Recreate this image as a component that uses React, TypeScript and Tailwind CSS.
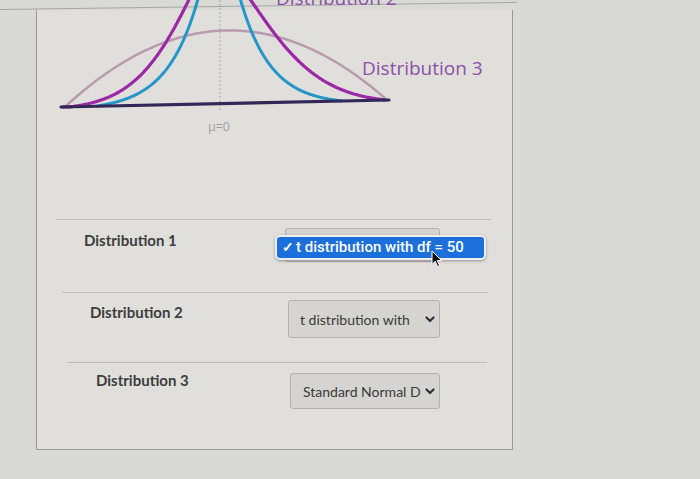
import React from "react";

const by = (x: number) => 107 - ((x - 60) * 7) / 327;

function build(fn: (x: number) => number, x0: number, x1: number) {
  let d = "";
  for (let x = x0; x <= x1; x += 1) {
    const y = fn(x);
    d += (d ? " L" : "M") + x.toFixed(1) + "," + y.toFixed(1);
  }
  return d;
}

const mauvePath = build((x) => {
  const d = x - 225;
  const t = Math.max(1 - (d / 161) ** 2, 0);
  return by(x) - 73 * t;
}, 64, 386);

const purplePath = build((x) => {
  const d = Math.abs(x - 220);
  let h: number;
  if (x < 220) {
    h = 160 * Math.exp(-0.00219 * Math.pow(d, 1.5)) - 2.9;
  } else {
    h = 140 * Math.exp(-0.00166 * Math.pow(d, 1.5)) - 4.2;
  }
  return by(x) - Math.max(h, 0);
}, 61, 385);

const cyanPath = build((x) => {
  const d = Math.abs(x - 218);
  const h = 215 * Math.exp(-d / 31) - 4;
  return by(x) - Math.max(h, 0);
}, 96, 341);

function Chevron() {
  return (
    <svg width="10" height="7" viewBox="0 0 10 7" className="shrink-0">
      <polyline
        points="1.5,1.5 5,5 8.5,1.5"
        fill="none"
        stroke="#333"
        strokeWidth="2.2"
        strokeLinecap="round"
        strokeLinejoin="round"
      />
    </svg>
  );
}

function Chart() {
  return (
    <svg width="477" height="219" viewBox="36 0 477 219" className="block">
      <line x1="219" y1="0" x2="219" y2="112" stroke="#a9a8a4" strokeWidth="1" strokeDasharray="2 2" />
      <path d={mauvePath} fill="none" stroke="#b99baf" strokeWidth="2.5" />
      <path d={cyanPath} fill="none" stroke="#2596c8" strokeWidth="3" />
      <path d={purplePath} fill="none" stroke="#9b28a5" strokeWidth="3.2" />
      <line x1="60" y1="107" x2="388" y2="100" stroke="#322858" strokeWidth="3.2" strokeLinecap="round" />
      <text x="275" y="5" fontSize="19" fill="#8c50aa" fontFamily="'Open Sans', sans-serif">
        Distribution 2
      </text>
      <text x="361" y="75" fontSize="19" fill="#8c50aa" fontFamily="'Open Sans', sans-serif">
        Distribution 3
      </text>
      <text x="207" y="131" fontSize="12.5" fill="#a09f9b" fontFamily="'Open Sans', sans-serif">
        μ=0
      </text>
    </svg>
  );
}

function Cursor() {
  return (
    <svg width="12" height="18" viewBox="0 0 12 18" className="absolute left-[145px] top-[21px]">
      <path
        d="M1,1 L1,14.5 L4.2,11.3 L6.6,16.6 L8.6,15.7 L6.3,10.5 L10.6,10.5 Z"
        fill="#111"
        stroke="#fff"
        strokeWidth="1"
        strokeLinejoin="round"
      />
    </svg>
  );
}

export default function App() {
  return (
    <div
      className="relative w-[700px] h-[479px] overflow-hidden bg-[#d9d9d5] flex flex-col"
      style={{ fontFamily: "Lato, 'Open Sans', sans-serif" }}
    >
      <div className="h-[10px] shrink-0" />
      <div className="ml-[36px] w-[477px] h-[440px] border-l border-r border-b border-[#9a9995] bg-[#e0dfdb] flex flex-col">
        <div className="-mt-[10px] h-[219px] shrink-0 relative">
          <div className="absolute left-[-37px] top-[9px] w-[517px] h-px bg-[#a6a5a1] origin-top-left -rotate-[0.8deg]" />
          <div className="relative">
            <Chart />
          </div>
        </div>
        <div className="h-px bg-[#bdbcb8] ml-[19px] w-[435px] shrink-0" />

        {/* Row 1 */}
        <div className="h-[72px] flex shrink-0">
          <div className="w-[248px] pl-[47px] pt-[10px] text-[15px] leading-[20px] font-bold text-[#3d3d3d]">
            Distribution 1
          </div>
          <div className="relative mt-[8px] w-[155px] h-[34px] rounded-[3px] border border-[#b3b2ae] bg-[#d5d4d0]">
            <div className="absolute left-[-11px] top-[6px] w-[211px] h-[25px] rounded-[5px] bg-[#efefed] p-[2px] shadow-[0_1px_3px_rgba(0,0,0,0.35)]">
              <div
                className="h-full rounded-[3px] bg-[#1d6fdc] flex items-center pl-[5px] gap-[2px] text-white text-[15px] font-medium whitespace-nowrap"
                style={{ fontFamily: "Roboto, 'Liberation Sans', sans-serif" }}
              >
                <span className="text-[14px] font-bold">✓</span>
                <span>t distribution with df = 50</span>
              </div>
            </div>
            <Cursor />
          </div>
        </div>
        <div className="h-px bg-[#bdbcb8] ml-[25px] w-[426px] shrink-0" />

        {/* Row 2 */}
        <div className="h-[69px] flex shrink-0">
          <div className="w-[251px] pl-[53px] pt-[9px] text-[15px] leading-[20px] font-bold text-[#3d3d3d]">
            Distribution 2
          </div>
          <div className="mt-[7px] w-[152px] h-[38px] rounded-[3px] border border-[#b3b2ae] bg-[#d5d4d0] flex items-center pl-[11px] pr-[4px]">
            <div className="w-[113px] whitespace-nowrap text-[14px] text-[#3a3a3a]">
              t distribution with
            </div>
            <div className="flex-1 flex justify-end">
              <Chevron />
            </div>
          </div>
        </div>
        <div className="h-px bg-[#bdbcb8] ml-[30px] w-[420px] shrink-0" />

        {/* Row 3 */}
        <div className="flex-1 flex">
          <div className="w-[253px] pl-[59px] pt-[7px] text-[15px] leading-[20px] font-bold text-[#3d3d3d]">
            Distribution 3
          </div>
          <div className="mt-[10px] w-[150px] h-[36px] rounded-[3px] border border-[#b3b2ae] bg-[#d5d4d0] flex items-center pl-[12px] pr-[4px]">
            <div className="w-[116px] whitespace-nowrap text-[14px] text-[#3a3a3a]">
              Standard Normal D
            </div>
            <div className="flex-1 flex justify-end">
              <Chevron />
            </div>
          </div>
        </div>
      </div>
    </div>
  );
}
